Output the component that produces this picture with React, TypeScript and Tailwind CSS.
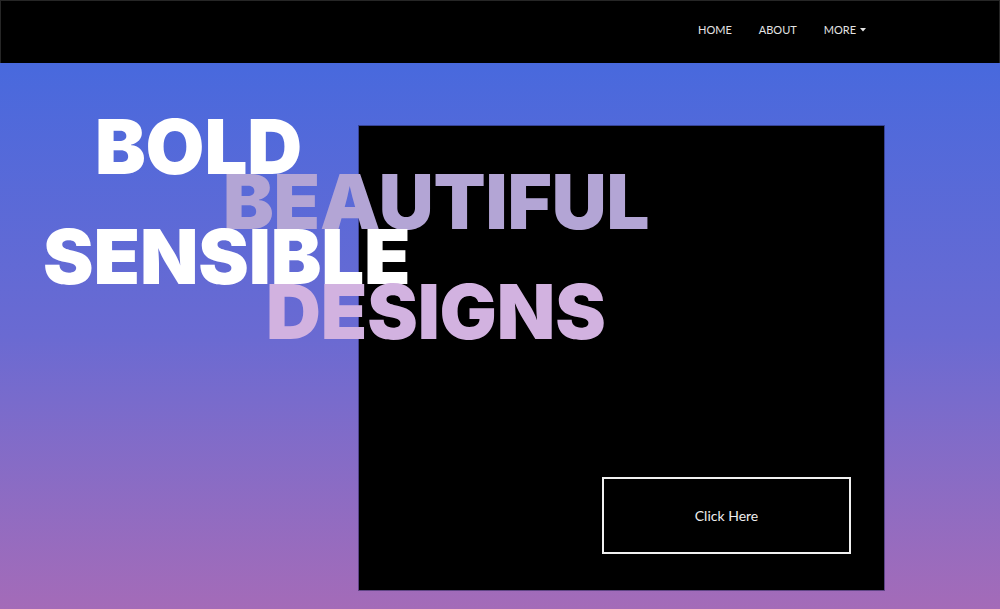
const navLinks = ["Home", "About"];

// big stacked headline, one word per line with its own indent
const headline = [
  { word: "BOLD", indent: "ml-[95px]", color: "text-white" },
  { word: "BEAUTIFUL", indent: "ml-[223px]", color: "text-[#b3a5d5]" },
  { word: "SENSIBLE", indent: "ml-[43px]", color: "text-white" },
  { word: "DESIGNS", indent: "ml-[266px]", color: "text-[#d2b2e0]" },
];

export default function App() {
  return (
    <div className="w-[1000px] h-[609px] overflow-hidden font-['Lato',sans-serif]">
      {/* Top bar */}
      <nav className="h-[63px] bg-black border border-b-0 border-[#262626] flex items-center justify-end pr-[133px] pb-[4px]">
        <div className="flex items-center gap-[27px] text-[11px] text-[#e4e4e4] uppercase">
          {navLinks.map((link) => (
            <a key={link} href="#" className="hover:text-white">{link}</a>
          ))}
          <a href="#" className="flex items-center gap-[4px] hover:text-white">
            More
            <svg width="6" height="4" viewBox="0 0 6 4" className="fill-current">
              <path d="M0 0h6L3 3.5z" />
            </svg>
          </a>
        </div>
      </nav>

      {/* Hero */}
      <section className="relative h-[546px] bg-gradient-to-b from-[#4869dd] via-[#6a6ad2] to-[#a46bb8]">
        <div className="ml-[359px] pt-[63px]">
          <div className="w-[525px] h-[464px] bg-black shadow-[0_0_0_1px_rgba(30,30,80,0.5)] flex items-end justify-end pr-[33px] pb-[36px]">
            <button className="w-[249px] h-[77px] border-2 border-[#f0f0f0] text-[#eeeeee] text-[14px] hover:bg-white hover:text-black transition-colors">
              Click Here
            </button>
          </div>
        </div>

        <h1 className="absolute left-0 top-[56px] z-10 font-['Inter',sans-serif] font-black text-[76px] leading-[55px] tracking-[-0.002em]">
          {headline.map((line) => (
            <span key={line.word} className={`block ${line.indent} ${line.color}`}>
              {line.word}
            </span>
          ))}
        </h1>
      </section>
    </div>
  );
}
